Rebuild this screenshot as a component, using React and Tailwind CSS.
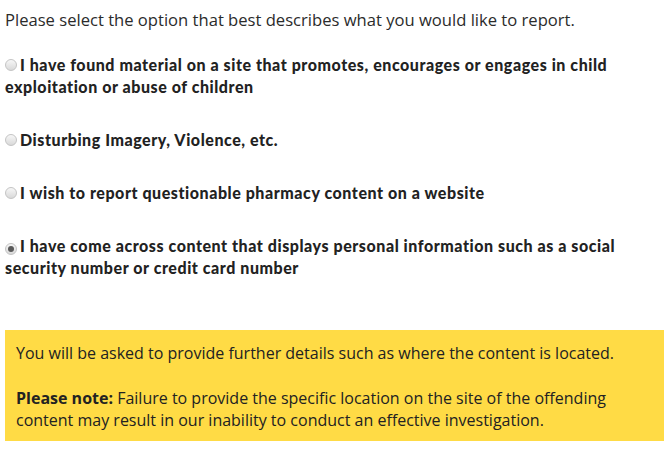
export default function App() {
  const options = [
    {
      text: "I have found material on a site that promotes, encourages or engages in child exploitation or abuse of children",
      checked: false,
    },
    { text: "Disturbing Imagery, Violence, etc.", checked: false },
    { text: "I wish to report questionable pharmacy content on a website", checked: false },
    {
      text: "I have come across content that displays personal information such as a social security number or credit card number",
      checked: true,
    },
  ];
  return (
    <div className="w-[670px] h-[455px] bg-white overflow-hidden pl-[5px] pr-[6px] pt-[8px] text-[#2b2b2b]">
      <p className="text-[16.6px] leading-[24px] mb-[22px]" style={{ fontFamily: '"Open Sans", sans-serif' }}>
        Please select the option that best describes what you would like to report.
      </p>
      <div className="flex flex-col gap-[31px] w-[632px]">
        {options.map((o, i) => (
          <label key={i} className="block text-[16px] leading-[22px] font-black tracking-[0.55px] text-[#222]" style={{ fontFamily: 'Lato, sans-serif' }}>
            <span className="inline-flex align-[0px] mr-[3px] w-[12px] h-[12px] rounded-full border border-[#c4c4c4] bg-gradient-to-b from-[#f7f7f7] to-[#d9d9d9] items-center justify-center">
              {o.checked && <span className="w-[6px] h-[6px] rounded-full bg-[#5a5a5a]" />}
            </span>
            {o.text}
          </label>
        ))}
      </div>
      <div className="mt-[51px] bg-[#ffdb45] pl-[11px] pr-[8px] pt-[12px] pb-[10px] text-[16px] leading-[22px] text-[#222]" style={{ fontFamily: '"Open Sans", sans-serif' }}>
        <p className="mb-[23px]">You will be asked to provide further details such as where the content is located.</p>
        <p>
          <strong className="font-bold">Please note:</strong>{" "}Failure to provide the specific location on the site of the offending content may result in our inability to conduct an effective investigation.
        </p>
      </div>
    </div>
  );
}
